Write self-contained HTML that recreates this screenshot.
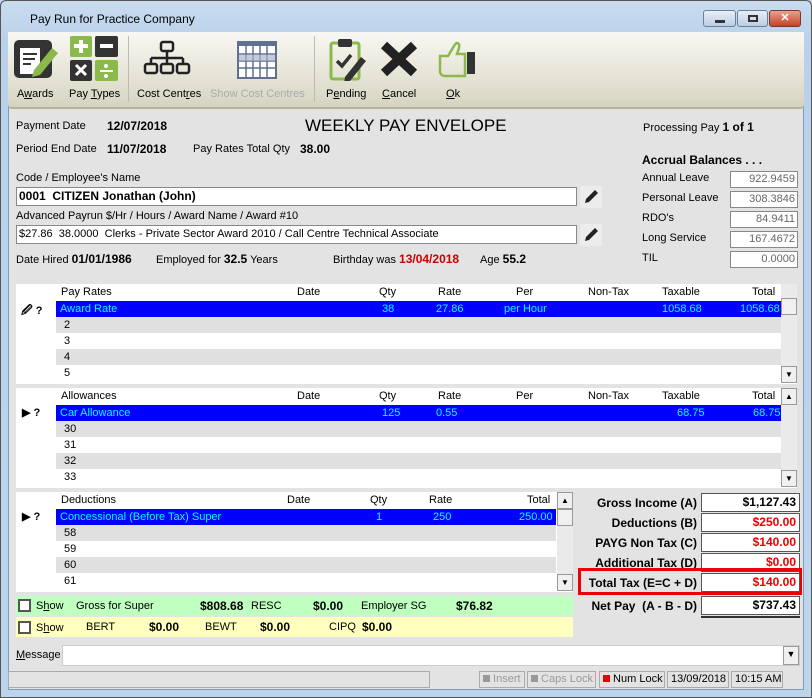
<!DOCTYPE html>
<html><head><style>
*{box-sizing:border-box;margin:0;padding:0}
body{width:812px;height:698px;background:#bcd4ec;font-family:"Liberation Sans",sans-serif;font-size:11px;color:#000;position:relative;overflow:hidden}
.a{position:absolute;white-space:nowrap}
.b{font-weight:bold}
.win{position:absolute;left:0;top:0;width:812px;height:698px;background:linear-gradient(#c9dcef,#b9d1ea 40px,#bcd4ec);border:1px solid #555;border-radius:6px 6px 0 0}
.client{position:absolute;left:8px;top:32px;width:796px;height:658px;background:#e3e3e3;border:1px solid #7f9db9}
.tb{position:absolute;left:8px;top:32px;width:796px;height:77px;background:linear-gradient(#f8f7f2,#e9e7db 50%,#d6d4c0);border-bottom:2px solid #b6b39a;border-radius:0 0 4px 4px}
.tl{position:absolute;top:88px;font-size:11px;white-space:nowrap}
.box{position:absolute;background:#fff}
.inp{position:absolute;background:#fff;border:1px solid #888;height:19px;white-space:nowrap;overflow:hidden}
.row{position:absolute;height:16px;font-size:11px;line-height:16px}
.sel{background:#0000ff;color:#0ff}
.g{background:#e0e0e0}
.sb{position:absolute;width:16px;background:#eaeaea}
.arr{position:absolute;width:16px;height:17px;background:#f0f0f0;border:1px solid #999;font-size:8px;text-align:center;line-height:15px}
.tot{position:absolute;left:701px;width:99px;height:19px;background:#fff;border:1px solid #555;text-align:right;padding-right:3px;font-weight:bold;font-size:12px;line-height:17px}
.tlab{position:absolute;right:115px;font-weight:bold;font-size:12px;white-space:nowrap}
.acc{position:absolute;left:730px;width:68px;height:17px;background:#fff;border:1px solid #888;text-align:right;padding-right:2px;color:#666;line-height:15px}
.st{position:absolute;top:671px;height:17px;border:1px solid #aaa;line-height:15px;padding-left:3px;color:#999;white-space:nowrap;overflow:hidden}
.pen{position:absolute;width:22px;height:22px;background:#ececec}
</style></head><body>
<div class="win"></div>
<div class="a" style="left:30px;top:12px;font-size:12px">Pay Run for Practice Company</div>
<div class="a" style="left:703px;top:10px;width:33px;height:17px;border:1px solid #6a7f9a;border-radius:3px;background:linear-gradient(#e7eef7,#bccde2)"><div style="position:absolute;left:11px;top:9px;width:10px;height:3px;background:#333"></div></div>
<div class="a" style="left:737px;top:10px;width:31px;height:17px;border:1px solid #6a7f9a;border-radius:3px;background:linear-gradient(#e7eef7,#bccde2)"><div style="position:absolute;left:10px;top:4px;width:10px;height:7px;border:2px solid #333"></div></div>
<div class="a" style="left:769px;top:10px;width:32px;height:17px;border:1px solid #7a3a2a;border-radius:3px;background:linear-gradient(#e9a08c,#c6412a);color:#fff;font-weight:bold;text-align:center;line-height:15px">✕</div>
<div class="client"></div>
<div class="tb"></div>
<svg class="a" style="left:12px;top:36px" width="50" height="46" viewBox="0 0 50 46"><rect x="2" y="4" width="38" height="38" rx="5" fill="#333"/><rect x="8" y="12" width="20" height="26" fill="#fff"/><path d="M11 18h14M11 23h12M11 28h8" stroke="#333" stroke-width="2"/><path d="M22 34l18-22 6 5-18 22-8 2z" fill="#8bb94b"/></svg>
<svg class="a" style="left:69px;top:35px" width="50" height="46"><rect x="1" y="1" width="22" height="21" rx="2" fill="#8bb94b"/><rect x="26" y="1" width="23" height="21" rx="2" fill="#333"/><rect x="1" y="25" width="22" height="21" rx="2" fill="#333"/><rect x="26" y="25" width="23" height="21" rx="2" fill="#8bb94b"/><path d="M12 5v13M5 11h14" stroke="#fff" stroke-width="4"/><path d="M31 11h13" stroke="#fff" stroke-width="4"/><path d="M7 30l10 10M17 30l-10 10" stroke="#fff" stroke-width="3"/><path d="M31 36h13" stroke="#fff" stroke-width="2"/><circle cx="37" cy="31" r="2" fill="#fff"/><circle cx="37" cy="41" r="2" fill="#fff"/></svg>
<svg class="a" style="left:143px;top:40px" width="50" height="36" fill="none" stroke="#222" stroke-width="2.5"><rect x="18" y="2" width="12" height="9" rx="2"/><path d="M24 11v7M8 18h32M8 18v6M24 18v6M40 18v6"/><rect x="2" y="24" width="12" height="9" rx="2"/><rect x="18" y="24" width="12" height="9" rx="2"/><rect x="34" y="24" width="12" height="9" rx="2"/></svg>
<svg class="a" style="left:237px;top:41px" width="40" height="38"><rect x="0" y="0" width="40" height="38" fill="#607090"/><rect x="2" y="5" width="36" height="31" fill="#fff"/><path d="M2 13h36M2 20h36M2 27h36M9 5v31M16 5v31M23 5v31M30 5v31" stroke="#607090" stroke-width="1.5"/><rect x="2" y="14" width="36" height="6" fill="#a8b4cc" opacity=".7"/></svg>
<svg class="a" style="left:329px;top:37px" width="40" height="44"><rect x="2" y="6" width="28" height="36" rx="2" fill="none" stroke="#8bb94b" stroke-width="3"/><rect x="9" y="2" width="14" height="8" rx="2" fill="#333"/><path d="M8 24l5 5 9-11" stroke="#333" stroke-width="3.5" fill="none"/><path d="M16 40l16-20 5 4-16 20-6 2z" fill="#333"/></svg>
<svg class="a" style="left:379px;top:40px" width="40" height="38"><path d="M5 5l30 28M35 5l-30 28" stroke="#222" stroke-width="9"/></svg>
<svg class="a" style="left:437px;top:40px" width="40" height="38"><path d="M3 16h8l6-10c3-5 6-3 5 2l-2 6h8v22H8c-3 0-5-2-5-5z" fill="none" stroke="#8bb94b" stroke-width="2.5"/><rect x="30" y="12" width="8" height="22" fill="#333"/></svg>
<div class="a" style="left:128px;top:36px;width:1px;height:66px;background:#bbb"></div>
<div class="a" style="left:314px;top:36px;width:1px;height:66px;background:#bbb"></div>
<div class="tl" style="left:17px">A<u>w</u>ards</div>
<div class="tl" style="left:69px">Pay <u>T</u>ypes</div>
<div class="tl" style="left:137px">Cost Cent<u>r</u>es</div>
<div class="tl" style="left:210px;color:#aaa">Show Cost Centres</div>
<div class="tl" style="left:326px">P<u>e</u>nding</div>
<div class="tl" style="left:382px"><u>C</u>ancel</div>
<div class="tl" style="left:446px"><u>O</u>k</div>
<div class="a" style="left:16px;top:120px">Payment Date</div>
<div class="a b" style="left:107px;top:119px;font-size:12px">12/07/2018</div>
<div class="a" style="left:305px;top:116px;font-size:17px">WEEKLY PAY ENVELOPE</div>
<div class="a" style="left:643px;top:120px">Processing Pay <b style="font-size:12px">1 of 1</b></div>
<div class="a" style="left:16px;top:143px">Period End Date</div>
<div class="a b" style="left:107px;top:142px;font-size:12px">11/07/2018</div>
<div class="a" style="left:193px;top:143px">Pay Rates Total Qty</div>
<div class="a b" style="left:300px;top:142px;font-size:12px">38.00</div>
<div class="a b" style="left:642px;top:153px;font-size:12px">Accrual Balances . . .</div>
<div class="a" style="left:642px;top:172px">Annual Leave</div><div class="acc" style="top:171px">922.9459</div>
<div class="a" style="left:642px;top:192px">Personal Leave</div><div class="acc" style="top:191px">308.3846</div>
<div class="a" style="left:642px;top:212px">RDO's</div><div class="acc" style="top:211px">84.9411</div>
<div class="a" style="left:642px;top:232px">Long Service</div><div class="acc" style="top:231px">167.4672</div>
<div class="a" style="left:642px;top:252px">TIL</div><div class="acc" style="top:251px">0.0000</div>
<div class="a" style="left:16px;top:172px">Code / Employee's Name</div>
<div class="inp" style="left:16px;top:187px;width:561px;font-weight:bold;font-size:12px;padding-left:2px;line-height:17px">0001&nbsp; CITIZEN Jonathan (John)</div>
<div class="a" style="left:16px;top:210px">Advanced Payrun $/Hr / Hours / Award Name / Award #10</div>
<div class="inp" style="left:16px;top:225px;width:561px;padding-left:2px;line-height:17px">$27.86&nbsp; 38.0000&nbsp; Clerks - Private Sector Award 2010 / Call Centre Technical Associate</div>
<div class="pen" style="left:580px;top:186px"></div><svg class="a" style="left:583px;top:189px" width="16" height="16"><path d="M2 14l1-4 9-9 3 3-9 9z" fill="#222"/></svg>
<div class="pen" style="left:580px;top:224px"></div><svg class="a" style="left:583px;top:227px" width="16" height="16"><path d="M2 14l1-4 9-9 3 3-9 9z" fill="#222"/></svg>
<div class="a" style="left:16px;top:252px">Date Hired <b style="font-size:12px">01/01/1986</b></div>
<div class="a" style="left:156px;top:252px">Employed for <b style="font-size:12px">32.5</b> Years</div>
<div class="a" style="left:333px;top:252px">Birthday was <b style="color:#c00;font-size:12px">13/04/2018</b></div>
<div class="a" style="left:480px;top:252px">Age <b style="font-size:12px">55.2</b></div>
<div class="box" style="left:16px;top:284px;width:781px;height:100px"></div>
<div class="a" style="left:61px;top:286px">Pay Rates</div><div class="a" style="left:297px;top:286px">Date</div><div class="a" style="left:379px;top:286px">Qty</div><div class="a" style="left:438px;top:286px">Rate</div><div class="a" style="left:516px;top:286px">Per</div><div class="a" style="left:588px;top:286px">Non-Tax</div><div class="a" style="left:662px;top:286px">Taxable</div><div class="a" style="left:752px;top:286px">Total</div>
<div class="a b" style="left:21px;top:302px">🖉 ?</div>
<div class="row sel" style="left:56px;top:301px;width:725px"><span class="a" style="left:4px">Award Rate</span><span class="a" style="left:326px">38</span><span class="a" style="left:380px">27.86</span><span class="a" style="left:448px">per Hour</span><span class="a" style="left:606px">1058.68</span><span class="a" style="left:684px">1058.68</span></div>
<div class="row g" style="left:56px;top:317px;width:725px;padding-left:8px">2</div>
<div class="row" style="left:56px;top:333px;width:725px;padding-left:8px">3</div>
<div class="row g" style="left:56px;top:349px;width:725px;padding-left:8px">4</div>
<div class="row" style="left:56px;top:365px;width:725px;padding-left:8px">5</div>
<div class="sb" style="left:781px;top:284px;height:99px"></div><div class="arr" style="left:781px;top:298px"> </div><div class="arr" style="left:781px;top:366px">▼</div>
<div class="box" style="left:16px;top:388px;width:781px;height:100px"></div>
<div class="a" style="left:61px;top:390px">Allowances</div><div class="a" style="left:297px;top:390px">Date</div><div class="a" style="left:379px;top:390px">Qty</div><div class="a" style="left:438px;top:390px">Rate</div><div class="a" style="left:516px;top:390px">Per</div><div class="a" style="left:588px;top:390px">Non-Tax</div><div class="a" style="left:662px;top:390px">Taxable</div><div class="a" style="left:752px;top:390px">Total</div>
<div class="a b" style="left:22px;top:406px">▶ ?</div>
<div class="row sel" style="left:56px;top:405px;width:725px"><span class="a" style="left:4px">Car Allowance</span><span class="a" style="left:326px">125</span><span class="a" style="left:380px">0.55</span><span class="a" style="left:621px">68.75</span><span class="a" style="left:697px">68.75</span></div>
<div class="row g" style="left:56px;top:421px;width:725px;padding-left:8px">30</div>
<div class="row" style="left:56px;top:437px;width:725px;padding-left:8px">31</div>
<div class="row g" style="left:56px;top:453px;width:725px;padding-left:8px">32</div>
<div class="row" style="left:56px;top:469px;width:725px;padding-left:8px">33</div>
<div class="sb" style="left:781px;top:388px;height:99px"></div><div class="arr" style="left:781px;top:388px">▲</div><div class="arr" style="left:781px;top:470px">▼</div>
<div class="box" style="left:16px;top:492px;width:557px;height:100px"></div>
<div class="a" style="left:61px;top:494px">Deductions</div><div class="a" style="left:287px;top:494px">Date</div><div class="a" style="left:370px;top:494px">Qty</div><div class="a" style="left:429px;top:494px">Rate</div><div class="a" style="left:527px;top:494px">Total</div>
<div class="a b" style="left:22px;top:510px">▶ ?</div>
<div class="row sel" style="left:56px;top:509px;width:500px"><span class="a" style="left:4px">Concessional (Before Tax) Super</span><span class="a" style="left:320px">1</span><span class="a" style="left:377px">250</span><span class="a" style="left:463px">250.00</span></div>
<div class="row g" style="left:56px;top:525px;width:500px;padding-left:8px">58</div>
<div class="row" style="left:56px;top:541px;width:500px;padding-left:8px">59</div>
<div class="row g" style="left:56px;top:557px;width:500px;padding-left:8px">60</div>
<div class="row" style="left:56px;top:573px;width:500px;padding-left:8px">61</div>
<div class="sb" style="left:557px;top:492px;height:99px"></div><div class="arr" style="left:557px;top:492px">▲</div><div class="arr" style="left:557px;top:509px"></div><div class="arr" style="left:557px;top:574px">▼</div>
<div class="a" style="left:16px;top:596px;width:557px;height:20px;background:#bfffbf"></div>
<div class="a" style="left:16px;top:617px;width:557px;height:20px;background:#ffffc0"></div>
<div class="a" style="left:18px;top:599px;width:13px;height:13px;border:2px solid #555;background:#fff"></div>
<div class="a" style="left:18px;top:621px;width:13px;height:13px;border:2px solid #555;background:#fff"></div>
<div class="a" style="left:36px;top:600px">S<u>h</u>ow</div><div class="a" style="left:76px;top:600px">Gross for Super</div><div class="a b" style="left:200px;top:599px;font-size:12px">$808.68</div><div class="a" style="left:251px;top:600px">RESC</div><div class="a b" style="left:313px;top:599px;font-size:12px">$0.00</div><div class="a" style="left:361px;top:600px">Employer SG</div><div class="a b" style="left:456px;top:599px;font-size:12px">$76.82</div>
<div class="a" style="left:36px;top:622px">S<u>h</u>ow</div><div class="a" style="left:86px;top:621px">BERT</div><div class="a b" style="left:149px;top:620px;font-size:12px">$0.00</div><div class="a" style="left:205px;top:621px">BEWT</div><div class="a b" style="left:260px;top:620px;font-size:12px">$0.00</div><div class="a" style="left:329px;top:621px">CIPQ</div><div class="a b" style="left:362px;top:620px;font-size:12px">$0.00</div>
<div class="tlab" style="top:496px">Gross Income (A)</div><div class="tot" style="top:493px">$1,127.43</div>
<div class="tlab" style="top:516px">Deductions (B)</div><div class="tot" style="top:513px;color:#e00">$250.00</div>
<div class="tlab" style="top:536px">PAYG Non Tax (C)</div><div class="tot" style="top:533px;color:#e00">$140.00</div>
<div class="tlab" style="top:556px">Additional Tax (D)</div><div class="tot" style="top:553px;color:#e00">$0.00</div>
<div class="a" style="left:578px;top:568px;width:224px;height:27px;border:3px solid #e00"></div>
<div class="tlab" style="top:576px">Total Tax (E=C + D)</div><div class="tot" style="top:573px;color:#e00">$140.00</div>
<div class="tlab" style="top:599px">Net Pay&nbsp; (A - B - D)</div><div class="tot" style="top:596px">$737.43</div>
<div class="a" style="left:701px;top:616px;width:99px;height:2px;background:#333"></div>
<div class="a" style="left:16px;top:649px"><u>M</u>essage</div>
<div class="inp" style="left:62px;top:645px;width:738px;height:21px;border-color:#ccc"></div>
<div class="arr" style="left:783px;top:646px;height:19px;font-size:9px">▼</div>
<div class="st" style="left:8px;width:422px"></div>
<div class="st" style="left:479px;width:46px"><span style="display:inline-block;width:7px;height:7px;background:#999"></span> Insert</div>
<div class="st" style="left:527px;width:69px"><span style="display:inline-block;width:7px;height:7px;background:#999"></span> Caps Lock</div>
<div class="st" style="left:599px;width:66px;color:#000"><span style="display:inline-block;width:7px;height:7px;background:#e00"></span> Num Lock</div>
<div class="st" style="left:667px;width:62px;color:#000">13/09/2018</div>
<div class="st" style="left:731px;width:52px;color:#000">10:15 AM</div>
</body></html>
